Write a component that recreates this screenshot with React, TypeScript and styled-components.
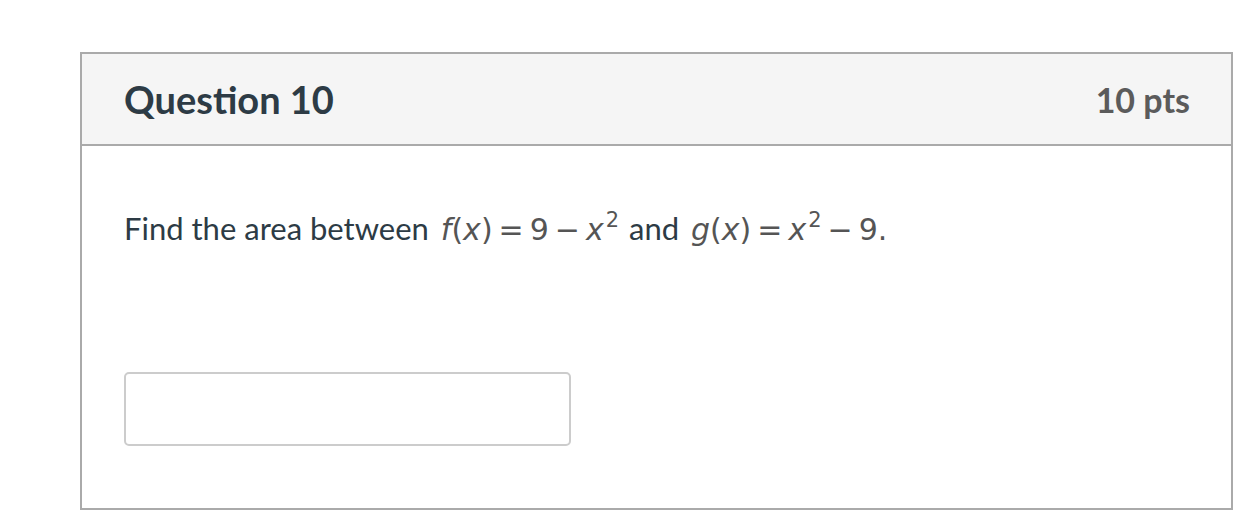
import React from "react";
import styled, { createGlobalStyle } from "styled-components";

const Global = createGlobalStyle`
  html, body { margin: 0; padding: 0; background: #fff; }
  body { font-family: Lato, "Liberation Sans", sans-serif; }
`;

const Page = styled.div`
  padding: 52px 2px 0 80px;
`;

const Card = styled.div`
  border: 2px solid #aaaaaa;
  background: #fff;
  height: 458px;
  box-sizing: border-box;
  display: flex;
  flex-direction: column;
`;

const Header = styled.div`
  background: #f5f5f5;
  border-bottom: 2px solid #aaaaaa;
  height: 92px;
  box-sizing: border-box;
  display: flex;
  align-items: center;
  justify-content: space-between;
  padding: 0 41px 0 42px;
`;

const Title = styled.h2`
  margin: 0;
  font-size: 38px;
  font-weight: 700;
  color: #2d3b45;
`;

const Points = styled.div`
  font-size: 34px;
  font-weight: 700;
  color: #5b5b5b;
`;

const Body = styled.div`
  padding: 64px 42px 0 42px;
`;

const Prompt = styled.p`
  margin: 0;
  font-size: 31px;
  color: #2d3b45;
  line-height: 1.2;
`;

const MathSpan = styled.span`
  font-family: "DejaVu Sans", Verdana, sans-serif;
  color: #555;
  font-size: 30px;
  white-space: nowrap;
  margin: 0 2px 0 4px;
`;

const Var = styled.i`
  font-style: italic;
`;

const Op = styled.span`
  margin: 0 6px;
`;

const Sup = styled.sup`
  font-size: 0.7em;
  vertical-align: 0;
  position: relative;
  top: -0.6em;
  margin-left: 2px;
`;

const Answer = styled.input`
  display: block;
  margin-top: 124px;
  width: 447px;
  height: 74px;
  box-sizing: border-box;
  border: 2px solid #cccccc;
  border-radius: 5px;
  background: #fff;
  outline: none;
`;

export default function App() {
  return (
    <>
      <Global />
      <Page>
        <Card>
          <Header>
            <Title>Question 10</Title>
            <Points>10 pts</Points>
          </Header>
          <Body>
            <Prompt>
              Find the area between{" "}
              <MathSpan>
                <Var>f</Var>(<Var>x</Var>)<Op>=</Op>9<Op>−</Op><Var>x</Var>
                <Sup>2</Sup>
              </MathSpan>{" "}
              and{" "}
              <MathSpan>
                <Var>g</Var>(<Var>x</Var>)<Op>=</Op><Var>x</Var>
                <Sup>2</Sup>
                <Op>−</Op>9.
              </MathSpan>
            </Prompt>
            <Answer type="text" aria-label="answer" />
          </Body>
        </Card>
      </Page>
    </>
  );
}
